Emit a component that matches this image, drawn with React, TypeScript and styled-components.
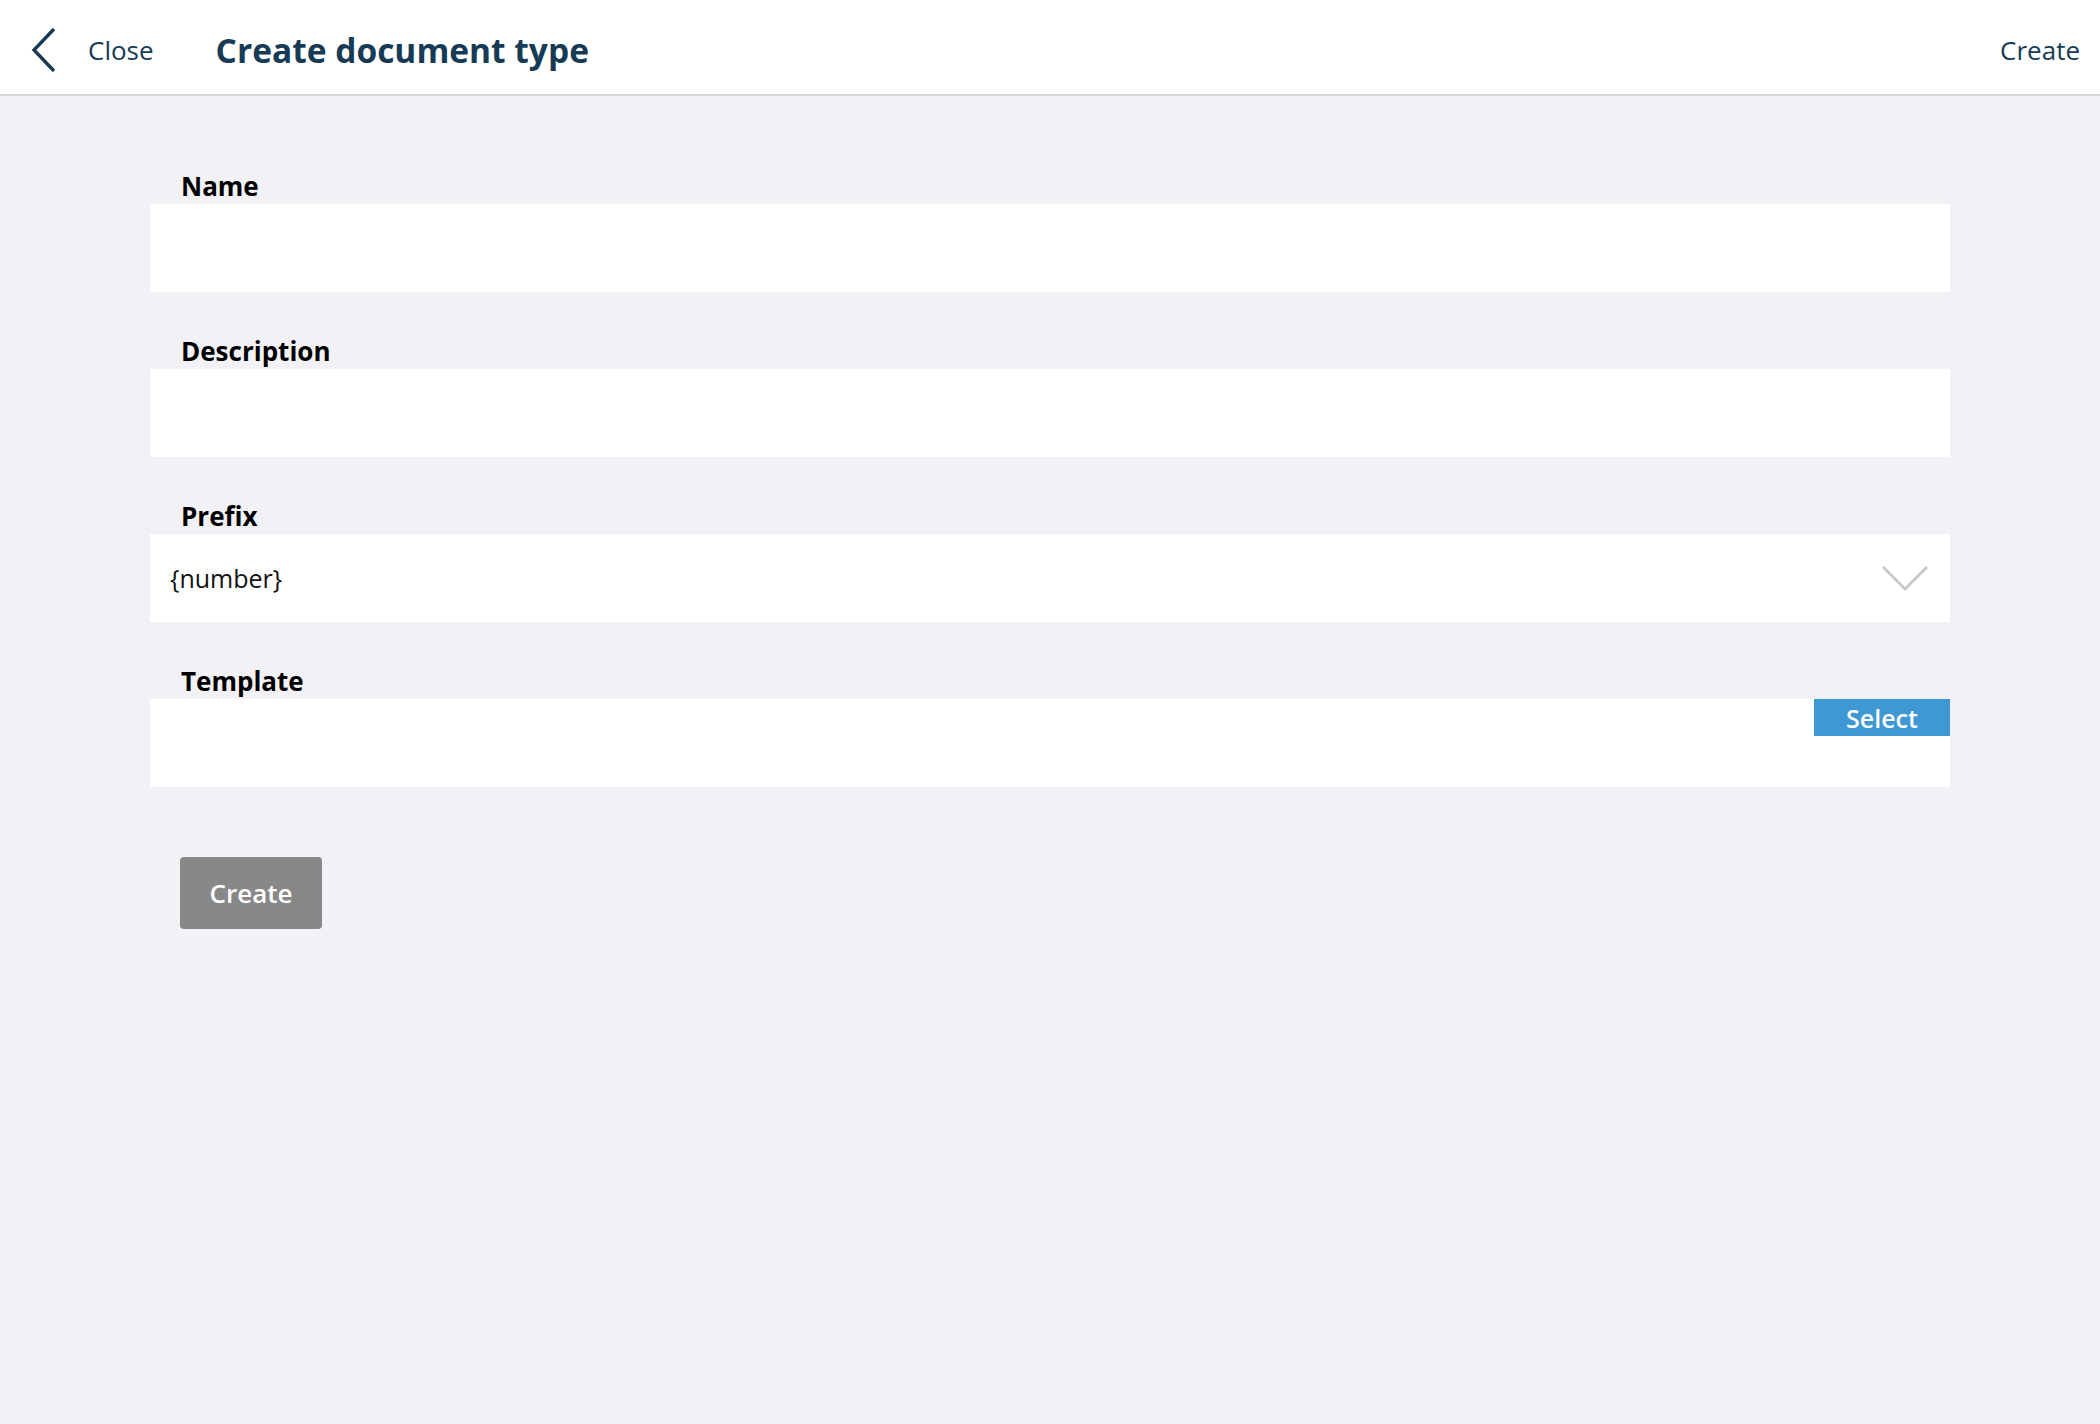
import React from 'react'
import styled, { createGlobalStyle } from 'styled-components'

const GlobalStyle = createGlobalStyle`
  html, body {
    margin: 0;
    padding: 0;
    background: #f2f2f6;
  }

  body {
    font-family: 'Open Sans', 'Noto Sans', Arial, sans-serif;
  }
`

const Page = styled.div`
  min-height: 1424px;
  background: #f2f2f6;
`

const Header = styled.header`
  box-sizing: border-box;
  display: flex;
  align-items: center;
  height: 96px;
  padding: 5px 20px 0 30px;
  background: #ffffff;
  border-bottom: 2px solid #d8d8da;
`

const BackButton = styled.button`
  display: flex;
  align-items: center;
  gap: 30px;
  padding: 0;
  border: 0;
  background: none;
  color: #173b55;
  font-family: inherit;
  font-size: 26px;
  cursor: pointer;
`

const Title = styled.h1`
  margin: 0 0 0 62px;
  flex: 1;
  font-size: 33.5px;
  font-weight: 700;
  color: #173b55;
`

const HeaderAction = styled.button`
  padding: 0;
  border: 0;
  background: none;
  color: #173b55;
  font-family: inherit;
  font-size: 26px;
  cursor: pointer;
`

const Form = styled.form`
  display: flex;
  flex-direction: column;
  gap: 41px;
  padding: 72px 150px 0;
`

const Field = styled.div`
  display: flex;
  flex-direction: column;
`

const Label = styled.label`
  padding-left: 31px;
  font-size: 26px;
  line-height: 36px;
  font-weight: 700;
  color: #000000;
`

const InputBox = styled.div`
  position: relative;
  display: flex;
  align-items: center;
  height: 88px;
  padding: 0 22px 0 20px;
  background: #ffffff;
  font-size: 25px;
  color: #111111;
`

const Value = styled.span`
  flex: 1;
`

const SelectButton = styled.button`
  position: absolute;
  top: 0;
  right: 0;
  width: 136px;
  height: 37px;
  border: 0;
  background: #3d98d4;
  color: #ffffff;
  font-family: inherit;
  font-size: 25px;
  font-weight: 600;
  cursor: pointer;
`

const SubmitRow = styled.div`
  padding: 29px 0 0 30px;
`

const SubmitButton = styled.button`
  width: 142px;
  height: 72px;
  border: 0;
  border-radius: 4px;
  background: #888888;
  color: #ffffff;
  font-family: inherit;
  font-size: 26px;
  font-weight: 600;
`

const ChevronLeft = () => (
  <svg width="28" height="46" viewBox="0 0 28 46" fill="none">
    <path d="M24 2 L4 23 L24 44" stroke="#173b55" strokeWidth="3.4" />
  </svg>
)

const ChevronDown = () => (
  <svg width="46" height="27" viewBox="0 0 46 27" fill="none">
    <path d="M1 2 L23 24 L45 2" stroke="#c8c8c8" strokeWidth="3" />
  </svg>
)

export default function App() {
  return (
    <Page>
      <GlobalStyle />
      <Header>
        <BackButton type="button">
          <ChevronLeft />
          Close
        </BackButton>
        <Title>Create document type</Title>
        <HeaderAction type="button">Create</HeaderAction>
      </Header>

      <Form>
        <Field>
          <Label>Name</Label>
          <InputBox />
        </Field>
        <Field>
          <Label>Description</Label>
          <InputBox />
        </Field>
        <Field>
          <Label>Prefix</Label>
          <InputBox>
            <Value>{'{number}'}</Value>
            <ChevronDown />
          </InputBox>
        </Field>
        <Field>
          <Label>Template</Label>
          <InputBox>
            <SelectButton type="button">Select</SelectButton>
          </InputBox>
        </Field>
        <SubmitRow>
          <SubmitButton type="button">Create</SubmitButton>
        </SubmitRow>
      </Form>
    </Page>
  )
}
